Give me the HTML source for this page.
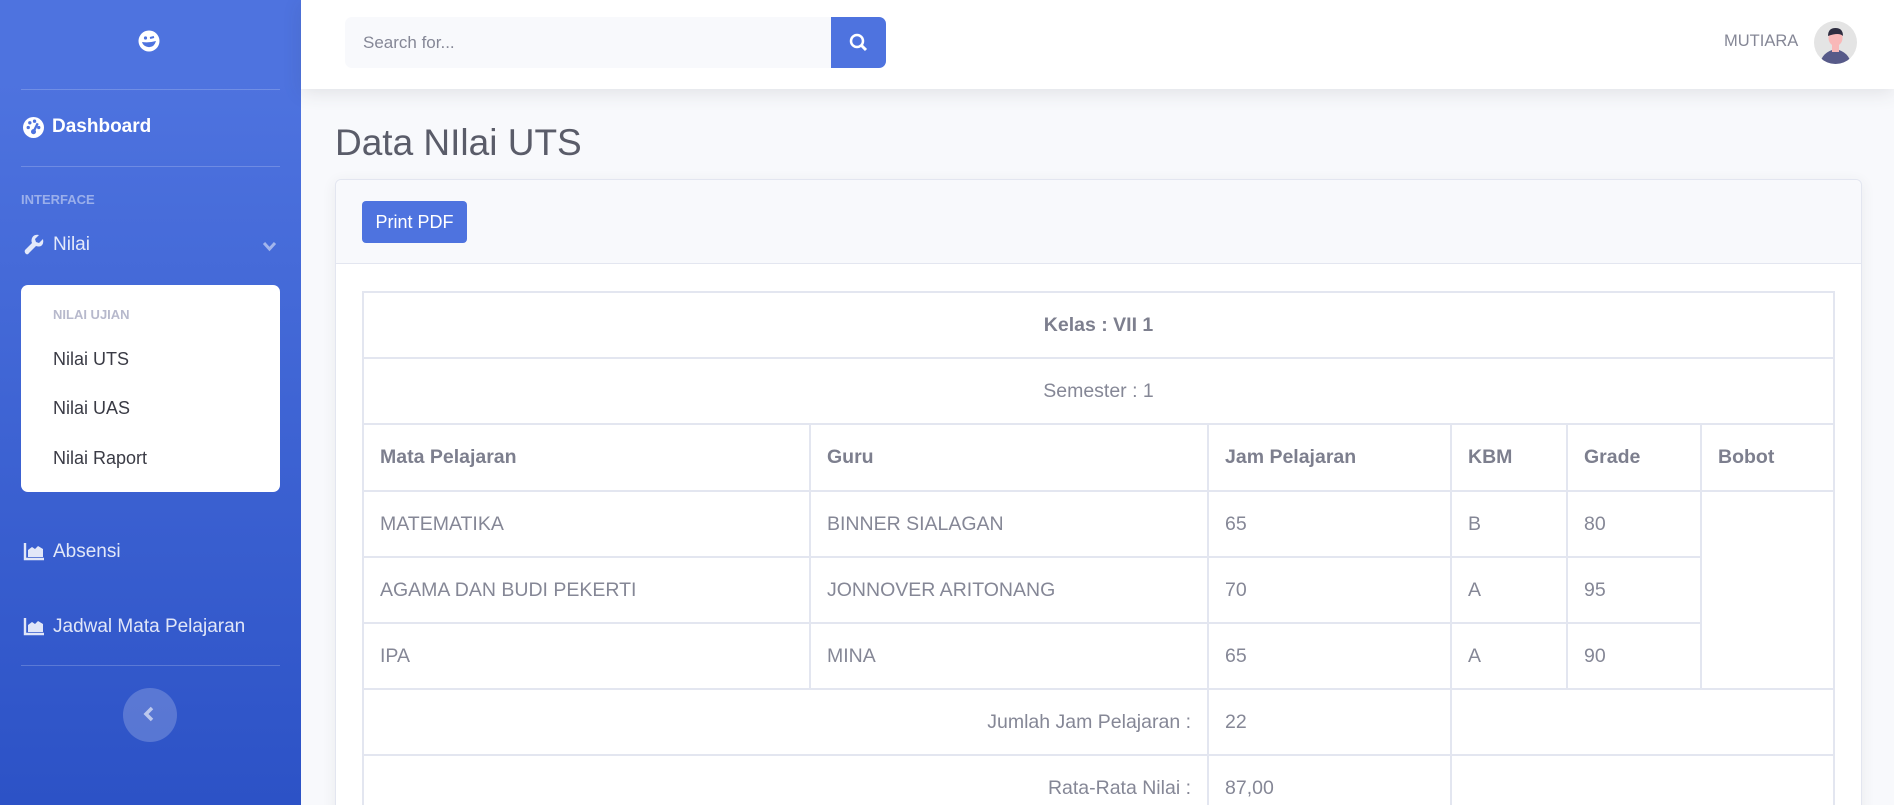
<!DOCTYPE html>
<html style="width:1894px;height:805px;overflow:hidden"><head><meta charset="utf-8"><style>
*{box-sizing:border-box;margin:0;padding:0}
body{width:1894px;height:805px;overflow:hidden;font-family:"Liberation Sans",sans-serif;background:#f8f9fc;position:relative;color:#858796}
#sb{position:absolute;left:0;top:0;width:301px;height:805px;background:linear-gradient(180deg,#4e73df 10%,#2c52c6 100%)}
.hr{position:absolute;left:21px;width:259px;height:1px;background:rgba(255,255,255,.2)}
.nav{position:absolute;left:23px;color:rgba(255,255,255,.85);font-size:19px;display:flex;align-items:center;gap:8px}
#top{position:absolute;left:301px;top:0;right:0;height:89px;background:#fff;box-shadow:0 4px 18px rgba(58,59,69,.12)}
table{border-collapse:collapse;table-layout:fixed;width:1471px;font-size:19.5px}
td{border:2px solid #e3e6f0;height:66px;padding:0 16px;vertical-align:middle}
th{border:2px solid #e3e6f0;height:67px;padding:0 16px;text-align:left;font-weight:bold;color:#7d7f8e}
</style></head><body>
<div id="sb">
 <svg style="position:absolute;left:138px;top:30px" width="22" height="22" viewBox="0 0 22 22"><circle cx="11" cy="11" r="10.5" fill="#fff"/><path d="M4 12 Q11 13 18 11 Q16 18 10 17 Q5 16 4 12Z" fill="#4e73df"/><circle cx="7.5" cy="8" r="1.6" fill="#4e73df"/><path d="M12 8 L16 7" stroke="#4e73df" stroke-width="2"/></svg>
 <div class="hr" style="top:89px"></div>
 <div class="nav" style="top:116px;color:#fff;font-weight:bold"><svg width="21" height="21" viewBox="0 0 20 20"><circle cx="10" cy="10" r="10" fill="#fff"/><circle cx="5" cy="10" r="1.6" fill="#4e73df"/><circle cx="6.5" cy="5.5" r="1.6" fill="#4e73df"/><circle cx="11" cy="4" r="1.6" fill="#4e73df"/><circle cx="15" cy="10" r="1.6" fill="#4e73df"/><path d="M10 14 L14 6" stroke="#4e73df" stroke-width="2.2"/><circle cx="10" cy="14" r="2.4" fill="#4e73df"/></svg>Dashboard</div>
 <div class="hr" style="top:166px"></div>
 <div style="position:absolute;left:21px;top:192px;font-size:13px;font-weight:bold;color:rgba(255,255,255,.45)">INTERFACE</div>
 <div class="nav" style="top:234px"><svg width="22" height="22" viewBox="0 0 22 22"><path d="M20 5 L16 9 L13 8 L12 5 L16 1 Q11 0 9 4 Q8 7 9 9 L2 16 Q1 18 3 20 Q5 21 6 19 L13 12 Q16 13 18 12 Q21 10 20 5Z" fill="rgba(255,255,255,.85)"/></svg>Nilai</div>
 <svg style="position:absolute;left:262px;top:241px" width="15" height="11" viewBox="0 0 15 11"><path d="M2 2 L7.5 8 L13 2" stroke="rgba(255,255,255,.5)" stroke-width="3" fill="none"/></svg>
 <div style="position:absolute;left:21px;top:285px;width:259px;height:207px;background:#fff;border-radius:7px">
  <div style="position:absolute;left:32px;top:22px;font-size:13px;font-weight:bold;color:#b7b9cc">NILAI UJIAN</div>
  <div style="position:absolute;left:32px;top:64px;font-size:18px;color:#3a3b45">Nilai UTS</div>
  <div style="position:absolute;left:32px;top:113px;font-size:18px;color:#3a3b45">Nilai UAS</div>
  <div style="position:absolute;left:32px;top:163px;font-size:18px;color:#3a3b45">Nilai Raport</div>
 </div>
 <div class="nav" style="top:541px"><svg width="22" height="20" viewBox="0 0 22 20"><path d="M2 1 V17 H21" stroke="rgba(255,255,255,.85)" stroke-width="2.4" fill="none"/><path d="M5 15 V8 L9 5 L12 7 L15 4 L20 7 V15Z" fill="rgba(255,255,255,.85)"/></svg>Absensi</div>
 <div class="nav" style="top:616px"><svg width="22" height="20" viewBox="0 0 22 20"><path d="M2 1 V17 H21" stroke="rgba(255,255,255,.85)" stroke-width="2.4" fill="none"/><path d="M5 15 V8 L9 5 L12 7 L15 4 L20 7 V15Z" fill="rgba(255,255,255,.85)"/></svg>Jadwal Mata Pelajaran</div>
 <div class="hr" style="top:665px"></div>
 <div style="position:absolute;left:123px;top:688px;width:54px;height:54px;border-radius:50%;background:rgba(255,255,255,.2)"><svg style="position:absolute;left:20px;top:18px" width="12" height="16" viewBox="0 0 12 16"><path d="M9 2 L3 8 L9 14" stroke="rgba(255,255,255,.6)" stroke-width="3.5" fill="none"/></svg></div>
</div>
<div id="top">
 <div style="position:absolute;left:44px;top:17px;width:497px;height:51px;background:#f8f9fc;border-radius:7px 0 0 7px;font-size:17px;color:#858796;padding:16px 0 0 18px">Search for...</div>
 <div style="position:absolute;left:530px;top:17px;width:55px;height:51px;background:#4e73df;border-radius:0 7px 7px 0"><svg style="position:absolute;left:18px;top:16px" width="19" height="19" viewBox="0 0 19 19"><circle cx="8" cy="8" r="6" stroke="#fff" stroke-width="2.5" fill="none"/><path d="M12.5 12.5 L17 17" stroke="#fff" stroke-width="3"/></svg></div>
 <div style="position:absolute;left:1423px;top:32px;font-size:16.5px;color:#858796">MUTIARA</div>
 <svg style="position:absolute;left:1513px;top:21px" width="43" height="43" viewBox="0 0 43 43"><clipPath id="c"><circle cx="21.5" cy="21.5" r="21.5"/></clipPath><g clip-path="url(#c)"><rect width="43" height="43" fill="#e4e4e4"/><path d="M6 43 Q8 31 21.5 28 Q35 31 37 43Z" fill="#575a89"/><rect x="18" y="22" width="7" height="9" fill="#f9b8b8"/><ellipse cx="21.5" cy="17" rx="7" ry="8" fill="#f9b8b8"/><path d="M14 15 Q14 7 21.5 7 Q29 7 29 15 Q25 11 14 15Z" fill="#2f2e41"/></g></svg>
</div>
<div style="position:absolute;left:335px;top:122px;font-size:37px;color:#5a5c69">Data NIlai UTS</div>
<div style="position:absolute;left:335px;top:179px;width:1527px;height:640px;background:#fff;border:1px solid #e3e6f0;border-radius:6px;box-shadow:0 3px 14px rgba(58,59,69,.08);overflow:hidden;clip-path:inset(-20px -20px 14px -20px)">
 <div style="height:84px;background:#f8f9fc;border-bottom:1px solid #e3e6f0;border-radius:6px 6px 0 0"></div>
 <div style="position:absolute;left:26px;top:21px;width:105px;height:42px;background:#4e73df;border-radius:4px;color:#fff;font-size:18px;line-height:42px;text-align:center">Print PDF</div>
 <div style="position:absolute;left:26px;top:111px">
 <table>
  <colgroup><col style="width:447px"><col style="width:398px"><col style="width:243px"><col style="width:116px"><col style="width:134px"><col style="width:133px"></colgroup>
  <tr><td colspan="6" style="text-align:center;font-weight:bold;color:#7d7f8e">Kelas : VII 1</td></tr>
  <tr><td colspan="6" style="text-align:center">Semester : 1</td></tr>
  <tr><th>Mata Pelajaran</th><th>Guru</th><th>Jam Pelajaran</th><th>KBM</th><th>Grade</th><th>Bobot</th></tr>
  <tr><td>MATEMATIKA</td><td>BINNER SIALAGAN</td><td>65</td><td>B</td><td>80</td><td rowspan="3"></td></tr>
  <tr><td>AGAMA DAN BUDI PEKERTI</td><td>JONNOVER ARITONANG</td><td>70</td><td>A</td><td>95</td></tr>
  <tr><td>IPA</td><td>MINA</td><td>65</td><td>A</td><td>90</td></tr>
  <tr><td colspan="2" style="text-align:right">Jumlah Jam Pelajaran :</td><td>22</td><td colspan="3"></td></tr>
  <tr><td colspan="2" style="text-align:right">Rata-Rata Nilai :</td><td>87,00</td><td colspan="3"></td></tr>
 </table>
 </div>
</div>
</body></html>
